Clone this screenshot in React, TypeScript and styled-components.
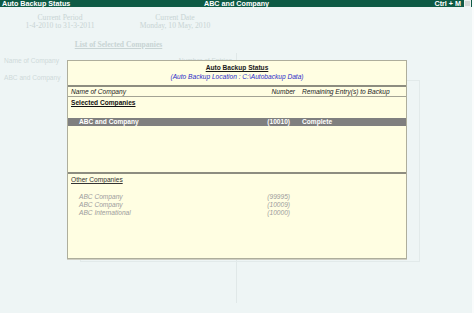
import styled, { createGlobalStyle } from "styled-components";

const GlobalStyle = createGlobalStyle`
  html, body {
    margin: 0;
    padding: 0;
    background: #eef5f5;
  }
  body {
    font-family: "Liberation Sans", Arial, sans-serif;
  }
`;

const Screen = styled.div`
  position: relative;
  width: 474px;
  height: 313px;
  overflow: hidden;
  display: flex;
  flex-direction: column;
  background: #eef5f5;
  border-right: 2px solid #fafcfc;
  box-sizing: border-box;
`;

const TitleBar = styled.div`
  height: 7px;
  background: #0e5a45;
  color: #ffffff;
  font-weight: bold;
  font-size: 7.2px;
  line-height: 7px;
  display: grid;
  grid-template-columns: 1fr auto 1fr;
  align-items: center;
  padding: 0 1px 0 2px;
  white-space: nowrap;
`;

const TitleRight = styled.div`
  display: flex;
  justify-content: flex-end;
  align-items: center;
  gap: 3px;
`;

const CloseBox = styled.span`
  display: block;
  width: 7px;
  height: 7px;
  background: #d3d8d6;
  border: 1px solid #eef1f0;
  box-sizing: border-box;
`;

const Backdrop = styled.div`
  flex: 1;
  display: flex;
  flex-direction: column;
  color: #c8d4d4;
  font-family: "Liberation Serif", "Times New Roman", serif;
  font-size: 7.6px;
`;

const PeriodRow = styled.div`
  display: grid;
  grid-template-columns: 120px 110px;
  padding-top: 7px;
  line-height: 8px;
  text-align: center;
`;

const ListTitle = styled.div`
  width: 237px;
  text-align: center;
  margin-top: 10px;
  font-weight: bold;
  text-decoration: underline;
  line-height: 9px;
`;

const BgTable = styled.div`
  flex: 1;
  display: grid;
  grid-template-columns: 237px 1fr;
  margin-top: 4px;
  margin-bottom: 10px;
  font-family: "Liberation Sans", Arial, sans-serif;
  font-size: 6.6px;
`;

const BgColumn = styled.div<{ $divider?: boolean }>`
  border-right: ${(p) => (p.$divider ? "1px solid #e0e8e8" : "none")};
  padding: 3px 4px;
  display: flex;
  flex-direction: column;
`;

const BgRow = styled.div<{ $gap?: number }>`
  display: flex;
  justify-content: space-between;
  line-height: 9px;
  margin-top: ${(p) => p.$gap ?? 0}px;
  color: #cfdada;
`;

const Frame = styled.div`
  position: absolute;
  left: 80px;
  top: 80px;
  width: 340px;
  height: 182px;
  border: 1px solid #e2eaea;
  box-sizing: border-box;
`;

const Dialog = styled.div`
  position: absolute;
  left: 67px;
  top: 60px;
  width: 340px;
  height: 199px;
  box-sizing: border-box;
  background: #fffee2;
  border: 1px solid #aeae9c;
  box-shadow: 0 1px 0 #cfcfc4;
  display: flex;
  flex-direction: column;
  font-size: 6.6px;
  color: #1a1a1a;
`;

const Heading = styled.div`
  padding-top: 2px;
  padding-bottom: 3px;
  text-align: center;
`;

const DialogTitle = styled.div`
  font-weight: bold;
  text-decoration: underline;
  line-height: 9px;
`;

const Location = styled.div`
  font-style: italic;
  color: #2b2bc8;
  line-height: 10px;
`;

const Rule = styled.div<{ $thick?: boolean }>`
  height: ${(p) => (p.$thick ? 2 : 1)}px;
  background: ${(p) => (p.$thick ? "#8d8d80" : "#a3a394")};
`;

type Tone = "head" | "active" | "other";

const Row = styled.div<{ $tone: Tone }>`
  display: grid;
  grid-template-columns: 194px 30px 1fr;
  padding-left: 3px;
  line-height: ${(p) => (p.$tone === "head" ? "9px" : "8px")};
  background: ${(p) => (p.$tone === "active" ? "#7f7f7f" : "transparent")};
  color: ${(p) =>
    p.$tone === "active" ? "#ffffff" : p.$tone === "other" ? "#9c9c9c" : "#222222"};
  font-weight: ${(p) => (p.$tone === "active" ? "bold" : "normal")};
  font-style: ${(p) => (p.$tone === "active" ? "normal" : "italic")};
  white-space: nowrap;
`;

const NameCell = styled.span<{ $indent?: boolean }>`
  padding-left: ${(p) => (p.$indent ? 8 : 0)}px;
`;

const NumCell = styled.span<{ $value?: boolean }>`
  text-align: right;
  margin-right: ${(p) => (p.$value ? 5 : 0)}px;
`;

const RestCell = styled.span`
  padding-left: 7px;
`;

const Section = styled.div<{ $height?: number }>`
  height: ${(p) => (p.$height ? `${p.$height}px` : "auto")};
  flex: ${(p) => (p.$height ? "none" : "1")};
  display: flex;
  flex-direction: column;
`;

const SectionLabel = styled.div<{ $bold?: boolean }>`
  padding-left: 3px;
  line-height: 9px;
  margin-top: 1px;
  text-decoration: underline;
  font-weight: ${(p) => (p.$bold ? "bold" : "normal")};
  color: ${(p) => (p.$bold ? "#111111" : "#333333")};
`;

const RowList = styled.div<{ $top: number }>`
  margin-top: ${(p) => p.$top}px;
  display: flex;
  flex-direction: column;
`;

const others = [
  { name: "ABC Company", number: "(99995)" },
  { name: "ABC Company", number: "(10009)" },
  { name: "ABC International", number: "(10000)" },
];

export default function App() {
  return (
    <Screen>
      <GlobalStyle />
      <TitleBar>
        <span>Auto Backup Status</span>
        <span>ABC and Company</span>
        <TitleRight>
          <span>Ctrl + M</span>
          <CloseBox />
        </TitleRight>
      </TitleBar>

      <Backdrop>
        <PeriodRow>
          <div>
            <div>Current Period</div>
            <div>1-4-2010 to 31-3-2011</div>
          </div>
          <div>
            <div>Current Date</div>
            <div>Monday, 10 May, 2010</div>
          </div>
        </PeriodRow>
        <ListTitle>List of Selected Companies</ListTitle>
        <BgTable>
          <BgColumn $divider>
            <BgRow>
              <span>Name of Company</span>
              <span>Number of Entries</span>
            </BgRow>
            <BgRow $gap={8}>
              <span>ABC and Company</span>
            </BgRow>
          </BgColumn>
          <BgColumn />
        </BgTable>
      </Backdrop>

      <Frame />
      <Dialog>
        <Heading>
          <DialogTitle>Auto Backup Status</DialogTitle>
          <Location>(Auto Backup Location : C:\Autobackup Data)</Location>
        </Heading>
        <Rule $thick />
        <Row $tone="head">
          <NameCell>Name of Company</NameCell>
          <NumCell>Number</NumCell>
          <RestCell>Remaining Entry(s) to Backup</RestCell>
        </Row>
        <Rule />
        <Section $height={75}>
          <SectionLabel $bold>Selected Companies</SectionLabel>
          <RowList $top={11}>
            <Row $tone="active">
              <NameCell $indent>ABC and Company</NameCell>
              <NumCell $value>(10010)</NumCell>
              <RestCell>Complete</RestCell>
            </Row>
          </RowList>
        </Section>
        <Rule $thick />
        <Section>
          <SectionLabel>Other Companies</SectionLabel>
          <RowList $top={9}>
            {others.map((c, i) => (
              <Row key={i} $tone="other">
                <NameCell $indent>{c.name}</NameCell>
                <NumCell $value>{c.number}</NumCell>
                <RestCell />
              </Row>
            ))}
          </RowList>
        </Section>
      </Dialog>
    </Screen>
  );
}
